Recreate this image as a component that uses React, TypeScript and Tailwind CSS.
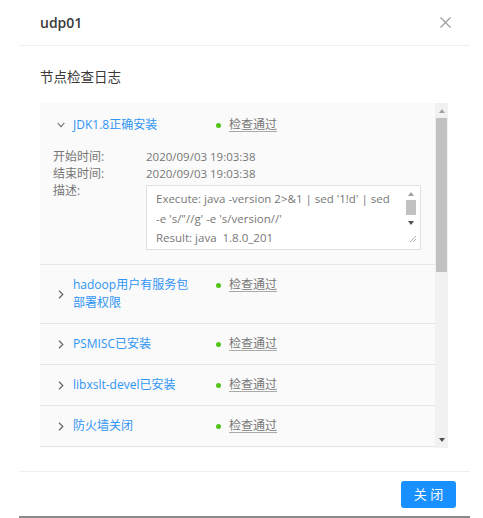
import React from "react";

const font = { fontFamily: '"Open Sans", "Noto Sans CJK SC", sans-serif' };

type Item = { title: string[]; open?: boolean };

const items: Item[] = [
  { title: ["JDK1.8正确安装"], open: true },
  { title: ["hadoop用户有服务包", "部署权限"] },
  { title: ["PSMISC已安装"] },
  { title: ["libxslt-devel已安装"] },
  { title: ["防火墙关闭"] },
];

function Chevron({ open }: { open?: boolean }) {
  return (
    <span className="w-[16px] h-[18px] flex items-center shrink-0">
      {open ? (
        <svg width="8" height="6" viewBox="0 0 8 6" fill="none">
          <path d="M0.7 1 L4 4.6 L7.3 1" stroke="#666" strokeWidth="1.1" />
        </svg>
      ) : (
        <svg width="6" height="9" viewBox="0 0 6 9" fill="none" className="ml-[1px]">
          <path d="M1 0.8 L4.8 4.5 L1 8.2" stroke="#666" strokeWidth="1.2" />
        </svg>
      )}
    </span>
  );
}

function Status() {
  return (
    <div className="flex items-start h-[18px]">
      <span className="mt-[7px] w-[5px] h-[5px] rounded-full bg-[#52c41a] shrink-0" />
      <span className="ml-[8px] text-[12px] leading-[18px] text-[#777] underline underline-offset-2 decoration-[#aaa]">
        检查通过
      </span>
    </div>
  );
}

function Detail() {
  return (
    <div className="pl-[13px] mt-[14px] text-[12px] text-[#777]">
      <div className="flex leading-[17px]">
        <span className="w-[93px]">开始时间:</span>
        <span className="text-[11.5px]">2020/09/03 19:03:38</span>
      </div>
      <div className="flex leading-[17px]">
        <span className="w-[93px]">结束时间:</span>
        <span className="text-[11.5px]">2020/09/03 19:03:38</span>
      </div>
      <div className="flex">
        <span className="w-[93px] leading-[17px]">描述:</span>
        <div className="mt-[3px] w-[275px] h-[65px] border border-[#e0e0e0] bg-white flex">
          <div className="flex-1 pl-[9px] pt-[3px] text-[11.5px] leading-[19.5px] text-[#777] whitespace-nowrap overflow-hidden">
            <div>Execute: java -version 2&gt;&amp;1 | sed '1!d' | sed</div>
            <div>-e 's/"//g' -e 's/version//'</div>
            <div>Result: java&nbsp; 1.8.0_201</div>
          </div>
          <div className="w-[12px] mr-[3px] flex flex-col items-center">
            <svg width="6" height="4" viewBox="0 0 6 4" className="mt-[6px]">
              <path d="M0 4 L3 0 L6 4 Z" fill="#a0a0a0" />
            </svg>
            <div className="mt-[4px] w-[10px] h-[15px] bg-[#c1c1c1]" />
            <svg width="6" height="4" viewBox="0 0 6 4" className="mt-[6px]">
              <path d="M0 0 L3 4 L6 0 Z" fill="#505050" />
            </svg>
            <svg width="8" height="8" viewBox="0 0 8 8" className="mt-[10px] self-end">
              <path d="M7 1 L1 7 M7 4 L4 7" stroke="#aaa" strokeWidth="0.9" />
            </svg>
          </div>
        </div>
      </div>
    </div>
  );
}

function Row({ item }: { item: Item }) {
  return (
    <div className={`border-b border-[#e6e6e6] ${item.open ? "pt-[13px] pb-[14px]" : "py-[11px]"}`}>
      <div className="flex items-start pl-[17px]">
        <span className={item.title.length > 1 ? "mt-[9px]" : ""}>
          <Chevron open={item.open} />
        </span>
        <div className="w-[143px] text-[12px] leading-[18px] text-[#2f95f5]">
          {item.title.map((t) => (
            <div key={t}>{t}</div>
          ))}
        </div>
        <Status />
      </div>
      {item.open && <Detail />}
    </div>
  );
}

export default function App() {
  return (
    <div className="w-[483px] h-[518px] bg-white" style={font}>
      <div className="ml-[19px] w-[451px] h-[518px] flex flex-col border-b-2 border-[#8a8a8a]">
        <div className="h-[46px] shrink-0 border-b border-[#efefef] flex items-center justify-between pl-[21px] pr-[19px]">
          <span className="text-[14px] font-semibold text-[#3a3a3a]">udp01</span>
          <svg width="11" height="11" viewBox="0 0 11 11">
            <path d="M0.5 0.5 L10.5 10.5 M10.5 0.5 L0.5 10.5" stroke="#999" strokeWidth="1.1" />
          </svg>
        </div>
        <div className="pl-[21px] pt-[20px]">
          <div className="text-[13.5px] leading-[22px] text-[#3a3a3a] font-normal">节点检查日志</div>
          <div className="mt-[15px] w-[408px] h-[345px] flex bg-[#fafafa]">
            <div className="w-[395px] overflow-hidden">
              {items.map((it, i) => (
                <Row key={i} item={it} />
              ))}
            </div>
            <div className="w-[13px] bg-[#f1f1f1] flex flex-col items-center">
              <svg width="6" height="4" viewBox="0 0 6 4" className="mt-[6px]">
                <path d="M0 4 L3 0 L6 4 Z" fill="#a3a3a3" />
              </svg>
              <div className="mt-[5px] w-[11px] h-[154px] bg-[#c1c1c1]" />
              <div className="flex-1" />
              <svg width="6" height="4" viewBox="0 0 6 4" className="mb-[6px]">
                <path d="M0 0 L3 4 L6 0 Z" fill="#505050" />
              </svg>
            </div>
          </div>
        </div>
        <div className="mt-[23px] border-t border-[#efefef] flex-1 flex justify-end items-start pt-[9px] pr-[14px]">
          <button className="w-[55px] h-[27px] rounded-[3px] bg-[#1890ff] text-white text-[13px] leading-[27px]">
            关 闭
          </button>
        </div>
      </div>
    </div>
  );
}
